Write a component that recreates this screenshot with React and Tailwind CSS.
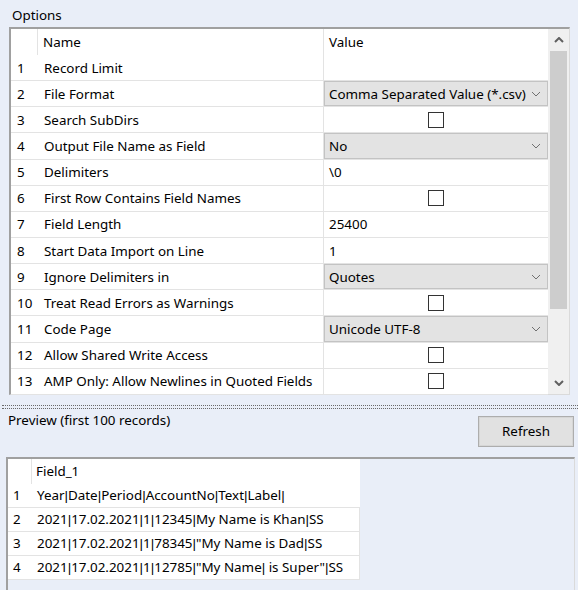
import React from "react";

const rows = [
  { n: 1, name: "Record Limit", type: "text", value: "" },
  { n: 2, name: "File Format", type: "select", value: "Comma Separated Value (*.csv)" },
  { n: 3, name: "Search SubDirs", type: "check" },
  { n: 4, name: "Output File Name as Field", type: "select", value: "No" },
  { n: 5, name: "Delimiters", type: "text", value: "\\0" },
  { n: 6, name: "First Row Contains Field Names", type: "check" },
  { n: 7, name: "Field Length", type: "text", value: "25400" },
  { n: 8, name: "Start Data Import on Line", type: "text", value: "1" },
  { n: 9, name: "Ignore Delimiters in", type: "select", value: "Quotes" },
  { n: 10, name: "Treat Read Errors as Warnings", type: "check" },
  { n: 11, name: "Code Page", type: "select", value: "Unicode UTF-8" },
  { n: 12, name: "Allow Shared Write Access", type: "check" },
  { n: 13, name: "AMP Only: Allow Newlines in Quoted Fields", type: "check" },
];

const preview = [
  "Year|Date|Period|AccountNo|Text|Label|",
  "2021|17.02.2021|1|12345|My Name is Khan|SS",
  '2021|17.02.2021|1|78345|"My Name is Dad|SS',
  '2021|17.02.2021|1|12785|"My Name| is Super"|SS',
];

function Piped({ text }) {
  const parts = text.split("|");
  return (
    <span className="whitespace-pre">
      {parts.map((p, i) => (
        <React.Fragment key={i}>
          {p}
          {i < parts.length - 1 && (
            <span style={{ fontFamily: '"Liberation Sans", sans-serif' }}>|</span>
          )}
        </React.Fragment>
      ))}
    </span>
  );
}

function Chevron({ up, className, color = "#707070", w = 1 }) {
  return (
    <svg width="10" height="6" viewBox="0 0 10 6" className={className}>
      <polyline
        points={up ? "1,5 5,1 9,5" : "1,1 5,5 9,1"}
        fill="none"
        stroke={color}
        strokeWidth={w}
      />
    </svg>
  );
}

function ValueCell({ row }) {
  if (row.type === "select") {
    return (
      <div className="h-full flex items-center justify-between bg-[#e3e3e3] border border-[#c3c3c3] pl-[4px] pr-[6px]">
        <span>{row.value}</span>
        <Chevron />
      </div>
    );
  }
  if (row.type === "check") {
    return (
      <div className="h-full flex items-center justify-center">
        <div className="w-[16px] h-[16px] border border-[#333333] bg-white" />
      </div>
    );
  }
  return <div className="h-full flex items-center pl-[5px]">{row.value}</div>;
}

export default function App() {
  return (
    <div
      className="w-[578px] h-[590px] bg-[#e9eef8] text-black text-[13.4px] overflow-hidden flex flex-col"
      style={{ fontFamily: '"Segoe UI", "Noto Sans", sans-serif' }}
    >
      <div className="h-[27px] pl-[12px] pt-[7px] leading-[16px]">Options</div>

      <div className="ml-[9px] w-[561px] h-[368px] border-t-2 border-l-2 border-[#a0a0a0] border-r border-b border-r-[#dadada] border-b-[#dadada] bg-white flex">
        <div className="flex-1 flex flex-col">
          <div className="h-[26px] flex shrink-0">
            <div className="w-[27px] border-r border-[#e3e3e3]" />
            <div className="w-[285px] pl-[5px] pt-[5px] leading-[16px]">Name</div>
            <div className="flex-1 border-l border-[#e3e3e3] pl-[5px] pt-[5px] leading-[16px]">Value</div>
          </div>
          {rows.map((r) => (
            <div key={r.n} className="h-[26.15px] shrink-0 flex border-b border-[#e3e3e3]">
              <div className="w-[27px] pl-[6px] flex items-center">{r.n}</div>
              <div className="w-[285px] pl-[6px] flex items-center whitespace-nowrap">{r.name}</div>
              <div className="flex-1 border-l border-[#e3e3e3]">
                <ValueCell row={r} />
              </div>
            </div>
          ))}
        </div>
        <div className="w-[21px] bg-[#f0f0f0] flex flex-col items-center">
          <div className="h-[22px] flex items-center justify-center">
            <Chevron up color="#606060" w={2} />
          </div>
          <div className="w-[17px] h-[258px] bg-[#cdcdcd]" />
          <div className="flex-1" />
          <div className="h-[22px] flex items-center justify-center">
            <Chevron color="#606060" w={2} />
          </div>
        </div>
      </div>

      <div className="h-[10px]" />
      <div className="ml-[2px] h-[4px] border-y border-dotted border-[#6a6a6a]" />

      <div className="h-[48px] flex items-start justify-between">
        <div className="pl-[8px] pt-[3px] leading-[16px]">Preview (first 100 records)</div>
        <button className="mt-[7px] mr-[4px] w-[96px] h-[31px] bg-[#e1e1e1] border border-[#adadad] shadow-[inset_0_0_0_1px_#d6d6d6] flex items-center justify-center">
          Refresh
        </button>
      </div>

      <div className="ml-[6px] w-[569px] flex-1 border-t-2 border-l-2 border-[#a0a0a0] border-r border-r-[#dadada]">
        <div className="w-[352px] bg-white flex flex-col">
          <div className="h-[25px] flex">
            <div className="w-[24px] border-r border-[#e3e3e3]" />
            <div className="flex-1 pl-[4px] flex items-center">Field_1</div>
          </div>
          {preview.map((p, i) => (
            <div
              key={i}
              className={
                "h-[24px] flex border-b border-[#e3e3e3] " +
                (i === 0 ? "" : "border-r")
              }
            >
              <div className="w-[24px] pl-[5px] flex items-center">{i + 1}</div>
              <div className="flex-1 pl-[5px] flex items-center whitespace-nowrap">
                <Piped text={p} />
              </div>
            </div>
          ))}
        </div>
      </div>
    </div>
  );
}
